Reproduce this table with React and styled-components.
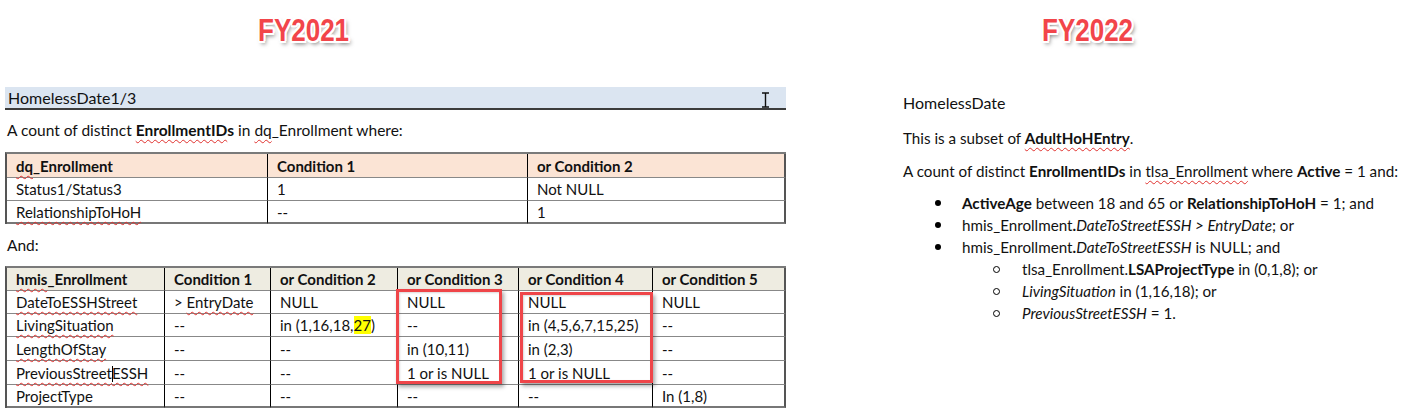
import React from "react";
import styled, { createGlobalStyle } from "styled-components";

const GlobalStyle = createGlobalStyle`
  body {
    margin: 0;
    background: #ffffff;
    font-family: "Lato", "Open Sans", sans-serif;
    color: #111111;
  }
`;

const Page = styled.div`
  display: flex;
  width: 1407px;
  height: 409px;
  overflow: hidden;
  background: #ffffff;
`;

const LeftCol = styled.div`
  display: flex;
  flex: none;
  flex-direction: column;
  width: 781px;
  margin-left: 5px;
`;

const RightCol = styled.div`
  display: flex;
  flex: none;
  flex-direction: column;
  margin-left: 117px;
  font-size: 15.2px;
`;

const YearTitle = styled.div`
  height: 60px;
  line-height: 60px;
  padding-left: ${(p) => p.$indent}px;
  font-family: "Liberation Sans", Arial, sans-serif;
  font-size: 26px;
  font-weight: 700;
  color: #f2454a;
  transform: scaleY(1.2);
  transform-origin: left center;
  text-shadow: 2px 0 0 #fff, -2px 0 0 #fff, 0 2px 0 #fff, 0 -2px 0 #fff,
    1.5px 1.5px 0 #fff, -1.5px 1.5px 0 #fff, 1.5px -1.5px 0 #fff,
    -1.5px -1.5px 0 #fff, 2px 3px 4px rgba(0, 0, 0, 0.55);
`;

const HeadingBar = styled.div`
  display: flex;
  align-items: center;
  margin-top: 27px;
  height: 21px;
  padding-left: 3px;
  background: #dbe5f1;
  border-bottom: 2px solid #3c3c3c;
  font-size: 16px;
`;

const IBeam = styled.svg`
  margin-left: auto;
  margin-right: 16px;
  margin-top: 4px;
`;

const Para = styled.div`
  margin-top: ${(p) => p.$gap}px;
  line-height: 20px;
  font-size: ${(p) => p.$size || 15.5}px;
  padding-left: ${(p) => p.$pad || 0}px;
  white-space: nowrap;
`;

const Heading = styled.div`
  margin-top: 33px;
  line-height: 20px;
  font-size: 16px;
`;

const Grid = styled.div`
  display: grid;
  grid-template-columns: ${(p) => p.$cols};
  grid-template-rows: ${(p) => p.$rows};
  margin-top: ${(p) => p.$gap}px;
  border-top: 2px solid #7a7a7a;
  border-left: 2px solid #555555;
  font-size: 15px;
`;

const Cell = styled.div`
  display: flex;
  align-items: center;
  padding-left: 9px;
  white-space: pre;
  border-right: ${(p) => (p.$last ? "2px solid #555555" : "1px solid #000000")};
  border-bottom: ${(p) => (p.$bottom ? "2px solid #777777" : "1px solid #888888")};
  background: ${(p) => p.$bg || "transparent"};
  font-weight: ${(p) => (p.$head ? 700 : 400)};
`;

const Misspelled = styled.span`
  text-decoration: underline wavy #e0322f;
  text-decoration-thickness: 1px;
  text-underline-offset: 3px;
  text-decoration-skip-ink: none;
`;

const Mark = styled.span`
  background: #ffff00;
`;

const Caret = styled.span`
  display: inline-block;
  width: 1px;
  height: 16px;
  margin: 0 -1px 0 0;
  background: #000000;
  vertical-align: -3px;
`;

const TableWrap = styled.div`
  position: relative;
`;

const RedBox = styled.div`
  position: absolute;
  left: ${(p) => p.$x}px;
  top: ${(p) => p.$y}px;
  width: ${(p) => p.$w}px;
  height: ${(p) => p.$h}px;
  box-sizing: border-box;
  border: 3px solid #ef4549;
  box-shadow: 2px 3px 4px rgba(0, 0, 0, 0.35), inset 1px 1px 2px rgba(0, 0, 0, 0.15);
`;

const List = styled.div`
  display: flex;
  flex-direction: column;
  margin-top: 11px;
`;

const Item = styled.div`
  display: flex;
  align-items: center;
  height: 22px;
  padding-left: ${(p) => (p.$sub ? 90 : 32)}px;
  white-space: nowrap;
`;

const Marker = styled.span`
  flex: none;
  box-sizing: border-box;
  width: ${(p) => (p.$sub ? 7 : 6)}px;
  height: ${(p) => (p.$sub ? 7 : 6)}px;
  margin-right: ${(p) => (p.$sub ? 22 : 21)}px;
  border-radius: 50%;
  background: ${(p) => (p.$sub ? "transparent" : "#000000")};
  border: ${(p) => (p.$sub ? "1px solid #000000" : "none")};
`;

const table1 = [
  [<><Misspelled>dq</Misspelled>_Enrollment</>, "Condition 1", "or Condition 2"],
  ["Status1/Status3", "1", "Not NULL"],
  [<Misspelled>RelationshipToHoH</Misspelled>, "--", "1"],
];

const table2 = [
  [<><Misspelled>hmis</Misspelled>_Enrollment</>, "Condition 1", "or Condition 2", "or Condition 3", "or Condition 4", "or Condition 5"],
  [<Misspelled>DateToESSHStreet</Misspelled>, <>{"> "}<Misspelled>EntryDate</Misspelled></>, "NULL", "NULL", "NULL", "NULL"],
  [<Misspelled>LivingSituation</Misspelled>, "--", <>in (1,16,18,<Mark>27</Mark>)</>, "--", "in (4,5,6,7,15,25)", "--"],
  [<Misspelled>LengthOfStay</Misspelled>, "--", "--", "in (10,11)", "in (2,3)", "--"],
  [<><Misspelled>PreviousStreet<Caret />ESSH</Misspelled></>, "--", "--", "1 or is NULL", "1 or is NULL", "--"],
  ["ProjectType", "--", "--", "--", "--", "In (1,8)"],
];

function DataGrid({ rows, cols, heights, gap, headBg }) {
  return (
    <Grid $cols={cols} $rows={heights} $gap={gap}>
      {rows.map((row, r) =>
        row.map((cell, c) => (
          <Cell
            key={`${r}-${c}`}
            $head={r === 0}
            $bg={r === 0 ? headBg : null}
            $last={c === row.length - 1}
            $bottom={r === rows.length - 1}
          >
            {cell}
          </Cell>
        ))
      )}
    </Grid>
  );
}

export default function App() {
  return (
    <Page>
      <GlobalStyle />
      <LeftCol>
        <YearTitle $indent={253}>FY2021</YearTitle>
        <HeadingBar>
          HomelessDate1/3
          <IBeam width="9" height="16" viewBox="0 0 9 16">
            <path d="M1 1h7M4.5 1v14M1 15h7" stroke="#111" strokeWidth="1.4" fill="none" />
          </IBeam>
        </HeadingBar>
        <Para $gap={10} $pad={2}>
          A count of distinct <b><Misspelled>EnrollmentID</Misspelled>s</b> in{" "}
          <Misspelled>dq</Misspelled>_Enrollment where:
        </Para>
        <DataGrid
          rows={table1}
          cols="261px 260px 1fr"
          heights="24px 23px 23px"
          gap={12}
          headBg="#fbe4d5"
        />
        <Para $gap={11} $pad={2}>And:</Para>
        <TableWrap>
          <DataGrid
            rows={table2}
            cols="158px 106px 127px 121px 134px 1fr"
            heights="23px 23px 23px 24px 24px 23px"
            gap={11}
            headBg="#eeece1"
          />
          <RedBox $x={391} $y={34} $w={106} $h={95} />
          <RedBox $x={515} $y={37} $w={133} $h={91} />
        </TableWrap>
      </LeftCol>
      <RightCol>
        <YearTitle $indent={139}>FY2022</YearTitle>
        <Heading>HomelessDate</Heading>
        <Para $gap={15} $size={15.2}>
          This is a subset of <b><Misspelled>AdultHoHEntry</Misspelled></b>.
        </Para>
        <Para $gap={13} $size={15.2}>
          A count of distinct <b>EnrollmentIDs</b> in <Misspelled>tlsa_Enrollment</Misspelled> where{" "}
          <b>Active</b> = 1 and:
        </Para>
        <List>
          <Item>
            <Marker />
            <span><b>ActiveAge</b> between 18 and 65 or <b>RelationshipToHoH</b> = 1; and</span>
          </Item>
          <Item>
            <Marker />
            <span>hmis_Enrollment<b>.</b><i>DateToStreetESSH &gt; EntryDate</i>; or</span>
          </Item>
          <Item>
            <Marker />
            <span>hmis_Enrollment<b>.</b><i>DateToStreetESSH</i> is NULL; and</span>
          </Item>
          <Item $sub>
            <Marker $sub />
            <span>tlsa_Enrollment.<b>LSAProjectType</b> in (0,1,8); or</span>
          </Item>
          <Item $sub>
            <Marker $sub />
            <span><i>LivingSituation</i> in (1,16,18); or</span>
          </Item>
          <Item $sub>
            <Marker $sub />
            <span><i>PreviousStreetESSH</i> = 1.</span>
          </Item>
        </List>
      </RightCol>
    </Page>
  );
}
